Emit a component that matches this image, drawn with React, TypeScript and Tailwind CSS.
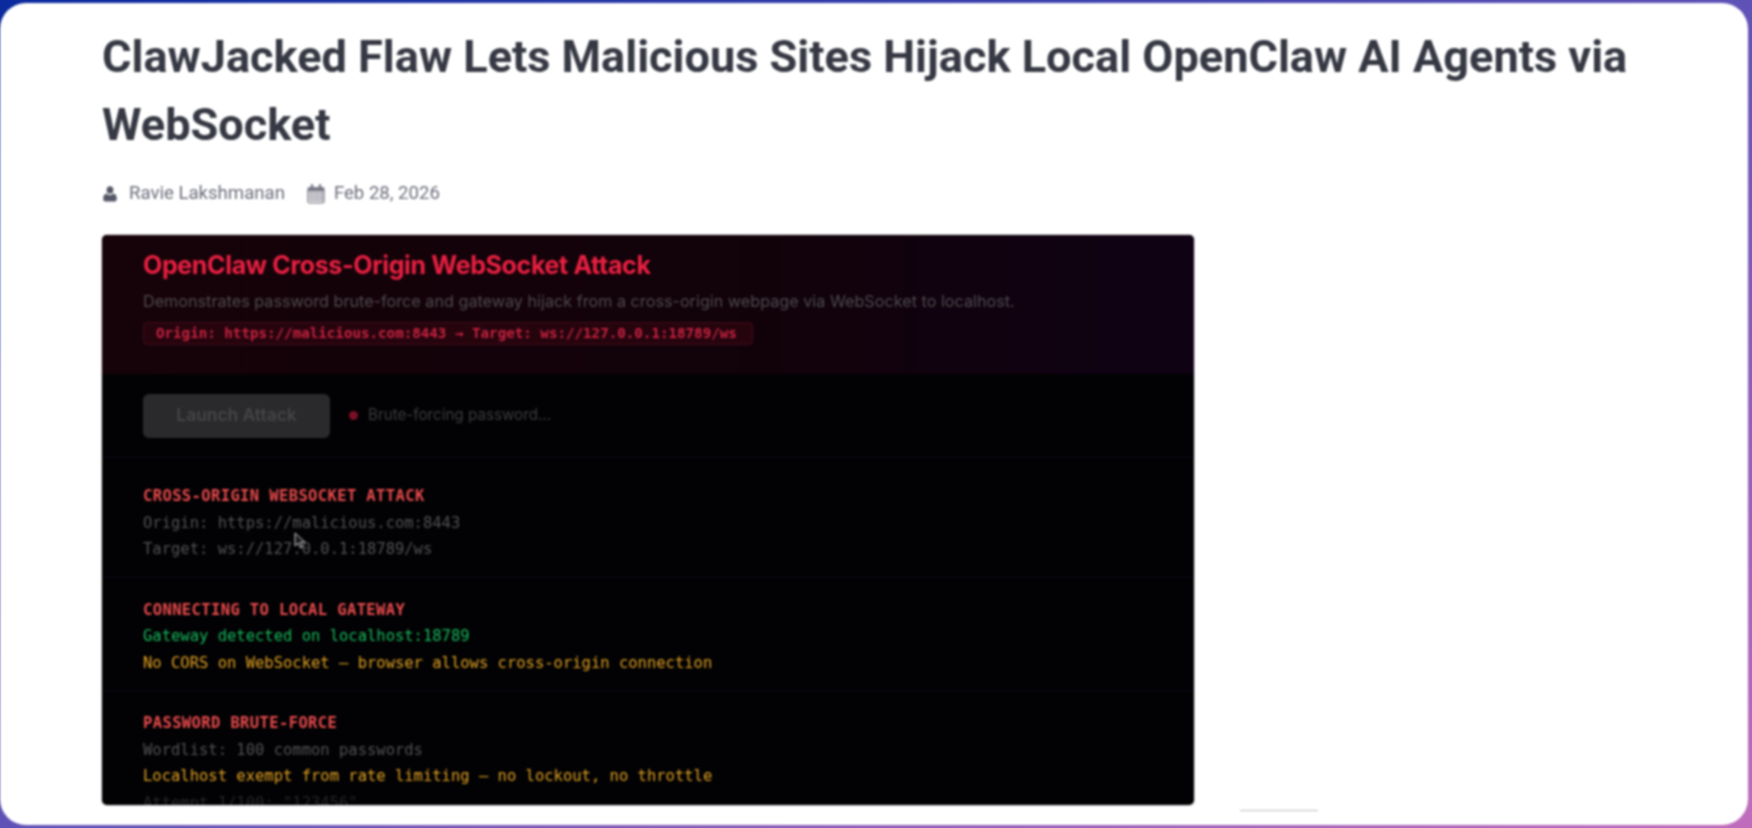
const mono = "font-['DejaVu_Sans_Mono','Liberation_Mono',monospace]";

function UserIcon() {
  return (
    <svg width="14" height="16" viewBox="0 0 14 16" className="text-[#555766]" fill="currentColor">
      <ellipse cx="7" cy="4" rx="3.4" ry="3.8" />
      <path d="M3.6 7.4C4.6 8.4 5.7 8.9 7 8.9s2.4-.5 3.4-1.5c2 .2 3.3 1.9 3.4 5.2.1 1.9-.8 3-2.4 3H2.6C1 15.6.1 14.500.2 12.600c.1-3.300 1.400-5 3.400-5.200z" />
    </svg>
  );
}

function Calendar() {
  return (
    <svg width="18" height="20" viewBox="0 0 18 20" fill="none" stroke="#737582">
      <rect x="1" y="3.500" width="16" height="15.500" rx="1.500" strokeWidth="1.200" />
      <path d="M1 5.800h16" strokeWidth="3.200" />
      <path d="M1 9.500h16M1 12.500h16M1 15.500h16M4.600 7.500v11M8 7.500v11M11.200 7.500v11M14.400 7.500v11" strokeWidth="0.800" />
      <path d="M5 1.200v3.500M13 1.200v3.500" strokeWidth="2.200" strokeLinecap="round" />
    </svg>
  );
}

function Group({ title, lines }: { title: string; lines: [string, string][] }) {
  return (
    <div className="flex flex-col">
      <div className="h-[26.5px] font-bold leading-[26.5px] tracking-[0.38px] text-[#ea4a4c]">{title}</div>
      {lines.map(([t, c]) => (
        <div key={t} className={`h-[26.5px] whitespace-pre leading-[26.5px] ${c}`}>
          {t}
        </div>
      ))}
    </div>
  );
}

export default function App() {
  return (
    <div className="h-[828px] w-[1752px] overflow-hidden bg-[linear-gradient(to_bottom_right,#0a2a9e_0%,#5f52b6_50%,#c06cbc_100%)] pb-[3px] pr-[4px] pt-[3px]">
      <div className="h-full rounded-[26px] bg-white pl-[102px] pt-[20px] font-['Roboto',sans-serif] blur-[0.8px]">
        <h1 className="w-[1560px] text-[45.1px] font-bold leading-[67.5px] text-[#363843]">
          ClawJacked Flaw Lets Malicious Sites Hijack Local OpenClaw AI Agents via WebSocket
        </h1>
        <div className="mt-[23px] flex h-[26px] items-center text-[18.6px] text-[#6d6f7c]">
          <span className="ml-[1px] mr-[12px] flex"><UserIcon /></span>
          <span>Ravie Lakshmanan</span>
          <span className="ml-[22px] mr-[9px] flex">
            <Calendar />
          </span>
          <span>Feb 28, 2026</span>
        </div>

        <div className="relative mt-[28px] h-[570px] w-[1092px] overflow-hidden rounded-[5px] bg-[#020204] shadow-[0_0_2px_rgba(0,0,0,0.45)]">
          <div className="h-[139px] bg-[linear-gradient(90deg,#160309_0%,#120209_55%,#0f0214_100%)] pl-[41px] pt-[13px] font-['Inter',sans-serif]">
            <div className="text-[25px] font-bold leading-[34px] tracking-[-0.35px] text-[#ea1f41]">
              OpenClaw Cross-Origin WebSocket Attack
            </div>
            <div className="mt-[8px] text-[16.2px] leading-[22px] text-[#4d4a4e]">
              Demonstrates password brute-force and gateway hijack from a cross-origin webpage via WebSocket to localhost.
            </div>
            <div className={`mt-[10px] w-[610px] rounded-[4px] border border-[#3f0c1a] bg-[#26040e] pl-[12px] text-[14.2px] font-bold leading-[21px] text-[#c8223f] ${mono}`}>
              Origin: https://malicious.com:8443 → Target: ws://127.0.0.1:18789/ws
            </div>
          </div>
          <div className="flex h-[84px] items-center border-b border-[#08081a] pl-[41px] font-['Inter',sans-serif]">
            <div className="flex h-[44px] w-[187px] items-center justify-center rounded-[6px] bg-[#2a2a2c] text-[17.4px] font-semibold text-[#454547]">
              Launch Attack
            </div>
            <div className="ml-[19px] h-[9px] w-[9px] rounded-full bg-[#7a1026]" />
            <div className="ml-[10px] text-[15.2px] text-[#3c3c40]">Brute-forcing password...</div>
          </div>
          <div className={`pl-[41px] pt-[25px] text-[15.5px] ${mono}`}>
            <Group
              title="CROSS-ORIGIN WEBSOCKET ATTACK"
              lines={[
                ["Origin: https://malicious.com:8443", "text-[#525257]"],
                ["Target: ws://127.0.0.1:18789/ws", "text-[#525257]"],
              ]}
            />
            <div className="-ml-[41px] mb-[19px] mt-[14px] h-px bg-[#07071a]" />
            <Group
              title="CONNECTING TO LOCAL GATEWAY"
              lines={[
                ["Gateway detected on localhost:18789", "text-[#17b85a]"],
                ["No CORS on WebSocket — browser allows cross-origin connection", "text-[#e0a020]"],
              ]}
            />
            <div className="-ml-[41px] mb-[19px] mt-[14px] h-px bg-[#07071a]" />
            <Group
              title="PASSWORD BRUTE-FORCE"
              lines={[
                ["Wordlist: 100 common passwords", "text-[#525257]"],
                ["Localhost exempt from rate limiting — no lockout, no throttle", "text-[#e0a020]"],
                ['Attempt 1/100: "123456"', "text-[#26262a]"],
              ]}
            />
          </div>
          <svg className="absolute left-[192px] top-[297px]" width="12" height="17" viewBox="0 0 12 17">
            <path d="M1 1v13l3.200-3 2.200 5 2.200-1-2.200-4.800H11z" fill="#1a1a1c" stroke="#c8c8c8" strokeWidth="1" />
          </svg>
        </div>
        <div className="ml-[1138px] mt-[5px] h-px w-[78px] bg-[#bdbdbd]" />
      </div>
    </div>
  );
}
